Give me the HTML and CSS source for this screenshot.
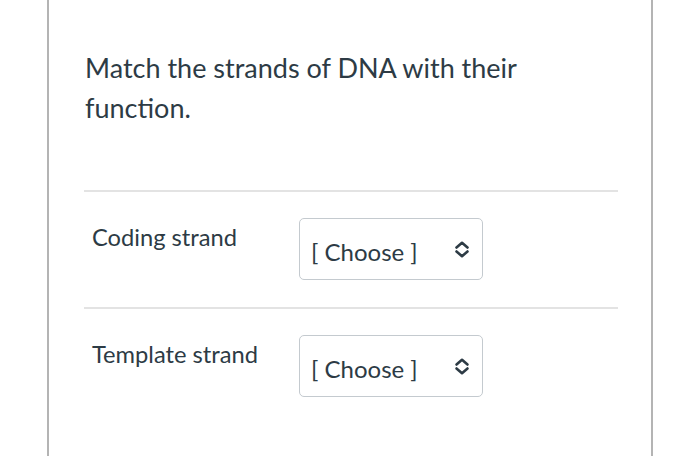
FILE: index.html
```html
<!DOCTYPE html>
<html>
<head>
<meta charset="utf-8">
<link rel="stylesheet" href="styles.css">
</head>
<body>
<div class="card">
  <div class="question">
    <p class="prompt">Match the strands of DNA with their function.</p>
    <div class="answers">
      <div class="row">
        <div class="label">Coding strand</div>
        <div class="select">
          <span class="select-text">[ Choose ]</span>
          <svg class="chev" width="16" height="17" viewBox="0 0 16 17"><path d="M2.5 6.5 L8 1.8 L13.5 6.5 M2.5 10.5 L8 15.2 L13.5 10.5" fill="none" stroke="#2d3b45" stroke-width="2.6" stroke-linecap="round" stroke-linejoin="round"/></svg>
        </div>
      </div>
      <div class="row">
        <div class="label">Template strand</div>
        <div class="select">
          <span class="select-text">[ Choose ]</span>
          <svg class="chev" width="16" height="17" viewBox="0 0 16 17"><path d="M2.5 6.5 L8 1.8 L13.5 6.5 M2.5 10.5 L8 15.2 L13.5 10.5" fill="none" stroke="#2d3b45" stroke-width="2.6" stroke-linecap="round" stroke-linejoin="round"/></svg>
        </div>
      </div>
    </div>
  </div>
</div>
</body>
</html>
```
FILE: styles.css
```css
html, body {
  margin: 0;
  padding: 0;
  background: #ffffff;
}
body {
  font-family: Lato, "Noto Sans", sans-serif;
  color: #2d3b45;
  height: 456px;
  overflow: hidden;
}
.card {
  margin-left: 47px;
  width: 602px;
  height: 456px;
  border-left: 2px solid #b4b4b4;
  border-right: 2px solid #b4b4b4;
  box-sizing: content-box;
}
.question {
  padding: 48px 33px 0 36px;
}
.prompt {
  margin: 0;
  font-size: 27px;
  line-height: 40px;
}
.answers {
  margin-top: 62px;
  margin-left: -1px;
}
.row {
  border-top: 2px solid #e3e3e3;
  display: flex;
  align-items: flex-start;
  padding: 26px 0 27px 8px;
}
.row:last-child {
  padding-bottom: 0;
}
.label {
  width: 207px;
  font-size: 23.7px;
  line-height: 29px;
  padding-top: 5px;
}
.select {
  border: 1px solid #c4cacf;
  border-radius: 5px;
  display: flex;
  align-items: center;
  justify-content: space-between;
  padding: 0 12px 0 11px;
  box-sizing: border-box;
  width: 184px;
  height: 62px;
}
.select-text {
  font-size: 24px;
  line-height: 29px;
  padding-top: 4px;
}
.chev {
  display: block;
  margin-top: 1px;
}
```
